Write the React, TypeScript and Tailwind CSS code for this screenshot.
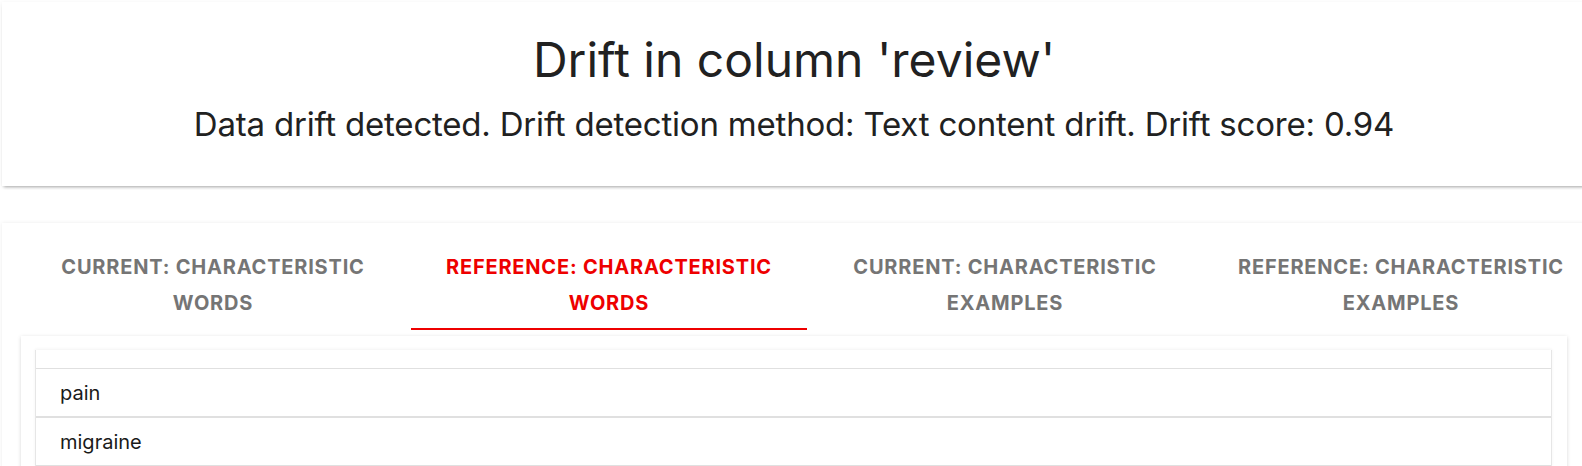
import React from "react";

const tabs = [
  { label: "Current: characteristic words", active: false },
  { label: "Reference: characteristic words", active: true },
  { label: "Current: characteristic examples", active: false },
  { label: "Reference: characteristic examples", active: false },
];

const words = ["pain", "migraine"];

export default function App() {
  return (
    <div
      className="w-full h-[466px] overflow-hidden bg-white text-[#212121]"
      style={{ fontFamily: "Inter, 'Noto Sans', sans-serif" }}
    >
      {/* Header card */}
      <div className="ml-[2px] mt-[2px] w-[1584px] h-[184px] bg-white pt-[30px] text-center shadow-[0_3px_3px_-2px_rgba(0,0,0,0.3),0_1px_4px_0_rgba(0,0,0,0.08)]">
        <h1 className="text-[48px] leading-[56px] font-normal">Drift in column 'review'</h1>
        <p className="mt-[16px] text-[33px] leading-[40px] tracking-[-0.2px]">
          Data drift detected. Drift detection method: Text content drift. Drift score: 0.94
        </p>
      </div>

      {/* Tabs card */}
      <div className="ml-[2px] mt-[37px] w-[1584px] bg-white shadow-[0_0_4px_0_rgba(0,0,0,0.08)] pb-4">
        <div className="flex ml-[13px]">
          {tabs.map((t) => (
            <div
              key={t.label}
              className={`w-[396px] shrink-0 pt-[26px] pb-[7px] border-b-2 text-center uppercase font-bold text-[20px] leading-[36px] tracking-[0.8px] ${
                t.active ? "border-[#ee0000] text-[#ee0000]" : "border-transparent text-[#757575]"
              }`}
            >
              <div className="px-[30px]">{t.label}</div>
            </div>
          ))}
        </div>

        <div className="mx-[19px] mt-[6px] bg-white p-[14px] pr-[15px] shadow-[0_1px_4px_0_rgba(0,0,0,0.16)]">
          <div className="border-l border-r border-[#e6e6e6] shadow-[0_-1px_3px_0_rgba(0,0,0,0.05)]">
            <div className="h-[19px] border-b border-[#e0e0e0]" />
            {words.map((w) => (
              <div
                key={w}
                className="h-[49px] flex items-center px-[24px] border-b-2 border-[#e0e0e0] text-[20px] text-[#1a1a1a]"
              >
                {w}
              </div>
            ))}
          </div>
        </div>
      </div>
    </div>
  );
}
